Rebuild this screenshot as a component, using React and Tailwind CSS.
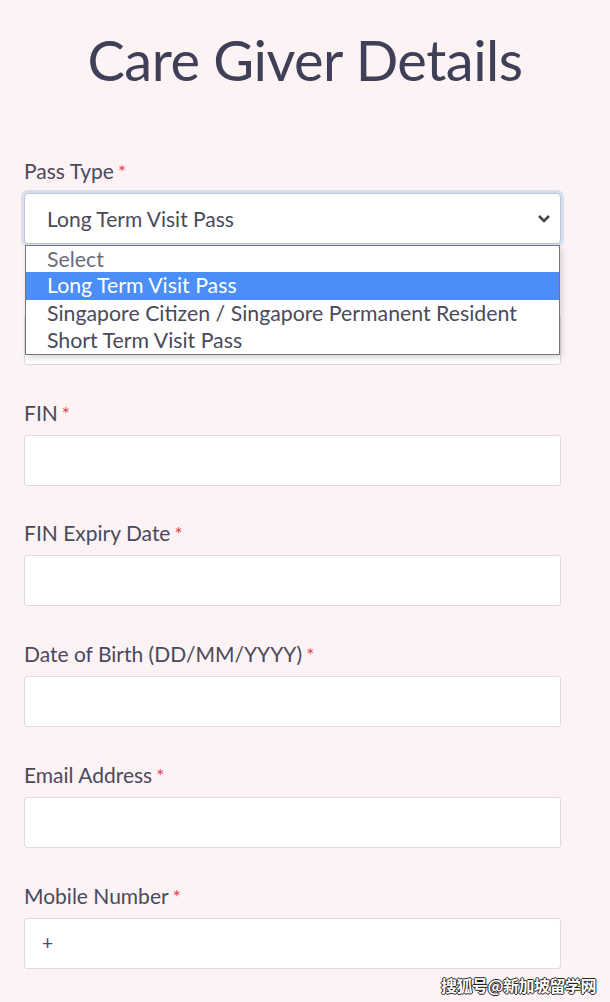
import React from "react";

const fields = [
    { label: "Full Name", value: "" },
    { label: "FIN", value: "" },
    { label: "FIN Expiry Date", value: "" },
    { label: "Date of Birth (DD/MM/YYYY)", value: "" },
    { label: "Email Address", value: "" },
    { label: "Mobile Number", value: "+" },
];

const options = [
    "Select",
    "Long Term Visit Pass",
    "Singapore Citizen / Singapore Permanent Resident",
    "Short Term Visit Pass",
];

function Label({ children }) {
    return (
        <label className="flex items-baseline h-[24px] text-[21px] leading-[24px] text-[#4a4a5c] mb-[10px]">
            {children}
            <span className="text-[#e0434f] ml-[4px] text-[19px] leading-[24px]">*</span>
        </label>
    );
}

export default function App() {
    return (
        <div
            className="relative min-h-[1002px] bg-[#fdf2f4] pt-[26px]"
            style={{ fontFamily: "Lato, 'Noto Sans', sans-serif" }}
        >
            <h1 className="text-center text-[56px] leading-[67px] text-[#3f3f58] tracking-[-0.5px] mb-[66px]">
                Care Giver Details
            </h1>

            <form className="ml-6 w-[537px]">
                <div className="relative mb-[35.75px] z-10">
                    <Label>Pass Type</Label>
                    <div className="h-[51px] rounded-[4px] border border-[#bfc5d8] shadow-[0_0_0_3px_#d9deec] bg-white flex items-center justify-between pl-[22px] pr-[9px] text-[21px] text-[#4a4a5c]">
                        <span>Long Term Visit Pass</span>
                        <svg width="14" height="10" viewBox="0 0 14 10" className="text-[#444]">
                            <polyline points="2,2 7,7 12,2" fill="none" stroke="currentColor" strokeWidth="2.6" />
                        </svg>
                    </div>
                    <ul className="absolute left-px top-[86px] w-[535px] bg-white border border-[#767676] shadow-[2px_3px_6px_rgba(0,0,0,0.15)] text-[21.3px] leading-[27px] text-[#4a4a5c]">
                        {options.map((opt, i) => (
                            <li
                                key={opt}
                                className={
                                    i === 1
                                        ? "bg-[#4a8ef6] text-white pl-[21px] h-[28px]"
                                        : i === 0
                                        ? "pl-[21px] h-[26px] text-[#6b6b78]"
                                        : "pl-[21px] h-[27px]"
                                }
                            >
                                {opt}
                            </li>
                        ))}
                    </ul>
                </div>

                {fields.map((f) => (
                    <div key={f.label} className="mb-[35.75px]">
                        <Label>{f.label}</Label>
                        <div className="h-[51px] rounded-[3px] border border-[#e0dada] bg-white flex items-center pl-[17px] text-[19px] text-[#4a4a5c]">
                            {f.value}
                        </div>
                    </div>
                ))}
            </form>

            <div
                className="absolute left-[441px] top-[973px] text-[16px] font-bold text-white tracking-[-0.5px]"
                style={{
                    fontFamily: "'Noto Sans CJK SC', sans-serif",
                    textShadow: "1px 0 0 #222, -1px 0 0 #222, 0 1px 0 #222, 0 -1px 0 #222",
                }}
            >
                搜狐号@新加坡留学网
            </div>
        </div>
    );
}
